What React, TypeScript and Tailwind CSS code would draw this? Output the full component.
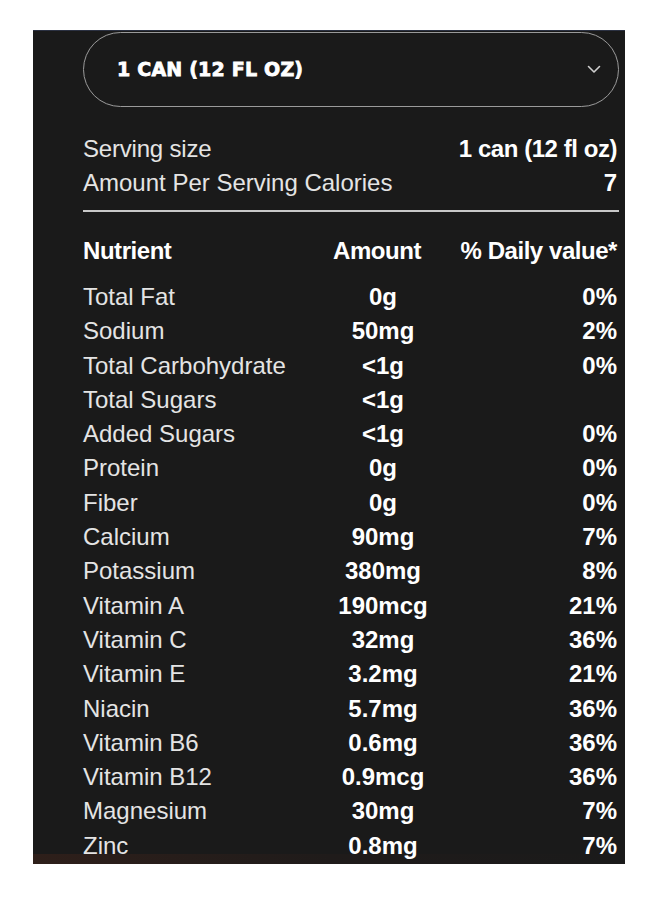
import React from "react";

const rows: [string, string, string][] = [
  ["Total Fat", "0g", "0%"],
  ["Sodium", "50mg", "2%"],
  ["Total Carbohydrate", "<1g", "0%"],
  ["Total Sugars", "<1g", ""],
  ["Added Sugars", "<1g", "0%"],
  ["Protein", "0g", "0%"],
  ["Fiber", "0g", "0%"],
  ["Calcium", "90mg", "7%"],
  ["Potassium", "380mg", "8%"],
  ["Vitamin A", "190mcg", "21%"],
  ["Vitamin C", "32mg", "36%"],
  ["Vitamin E", "3.2mg", "21%"],
  ["Niacin", "5.7mg", "36%"],
  ["Vitamin B6", "0.6mg", "36%"],
  ["Vitamin B12", "0.9mcg", "36%"],
  ["Magnesium", "30mg", "7%"],
  ["Zinc", "0.8mg", "7%"],
];

export default function App() {
  return (
    <div className="w-[660px] h-[900px] bg-white pt-[30px] pl-[33px]">
      <div
        className="relative w-[592px] h-[834px] bg-[#1a1a1a] pl-[50px] pr-[8px] pt-[1px] border-t border-[#2b3142] overflow-hidden"
        style={{ fontFamily: "'Liberation Sans', Arial, sans-serif" }}
      >
        <div className="absolute left-0 right-0 bottom-0 h-[10px] bg-gradient-to-r from-[#2e1f1a] via-[#1f1b1a] to-[#1a1a1a]" />

        <div className="relative flex items-center justify-between h-[75px] mr-[-2px] rounded-full border-[1.5px] border-[#9a9a9a] pl-[33px] pr-[17px]">
          <span
            className="text-white font-bold text-[19px] tracking-[0.2px] [-webkit-text-stroke:0.8px_white]"
            style={{ fontFamily: "'DejaVu Sans', sans-serif" }}
          >
            1 CAN (12 FL OZ)
          </span>
          <svg width="14" height="9" viewBox="0 0 14 9" fill="none">
            <polyline points="1.5,1.5 7,7 12.5,1.5" stroke="#cfcfcf" strokeWidth="1.6" strokeLinecap="round" strokeLinejoin="round" />
          </svg>
        </div>

        <div className="relative mt-[25px] text-[24px] leading-[34px] text-[#e4e4e4]">
          <div className="flex justify-between">
            <span className="tracking-[-0.2px]">Serving size</span>
            <span className="font-bold text-white tracking-[-0.45px]">1 can (12 fl oz)</span>
          </div>
          <div className="flex justify-between">
            <span>Amount Per Serving Calories</span>
            <span className="font-bold text-white">7</span>
          </div>
        </div>

        <div className="mt-[10px] h-[2px] bg-[#c8c8c8] mr-[-2px]" />

        <div className="mt-[22px] grid grid-cols-[250px_100px_1fr] text-[24px] leading-[34px] font-bold text-white tracking-[-0.45px]">
          <span>Nutrient</span>
          <span className="text-center pr-[22px] whitespace-nowrap">Amount</span>
          <span className="text-right whitespace-nowrap">% Daily value*</span>
        </div>

        <div className="relative mt-[12px] text-[24px] leading-[34.3px]">
          {rows.map(([n, a, p]) => (
            <div key={n} className="grid grid-cols-[250px_100px_1fr]">
              <span className="text-[#e4e4e4] whitespace-nowrap">{n}</span>
              <span className="text-center font-bold text-white whitespace-nowrap">{a}</span>
              <span className="text-right font-bold text-white">{p}</span>
            </div>
          ))}
        </div>
      </div>
    </div>
  );
}
